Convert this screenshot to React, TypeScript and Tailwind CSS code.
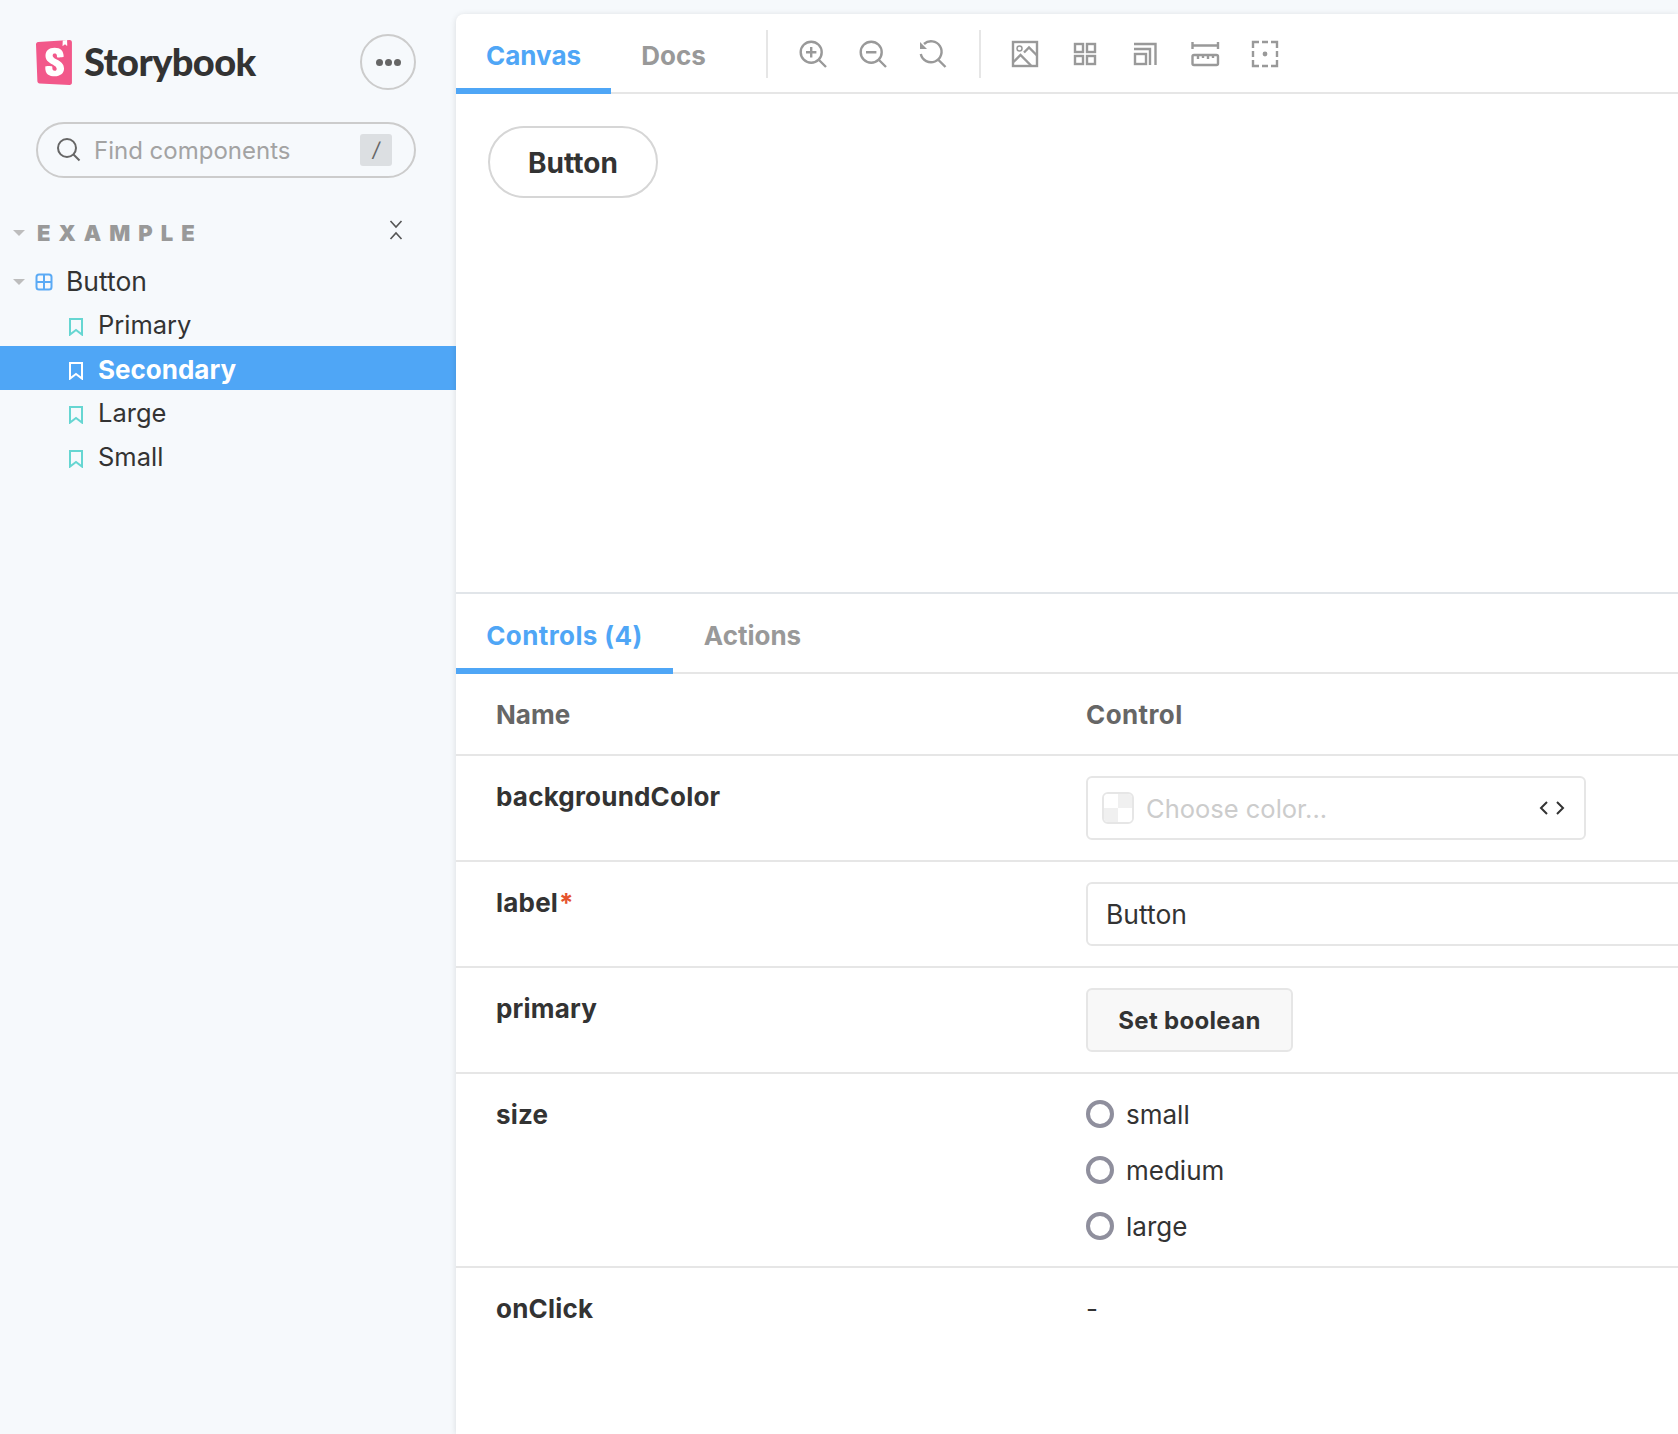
import React from "react";

const Gray = "#999999";

function Logo() {
  return (
    <svg width="36" height="45" viewBox="0 0 256 319" className="shrink-0">
      <path d="M9.87 293.32L.01 30.57C-.31 21.9 6.34 14.54 15 14L238.49.03c8.82-.55 16.42 6.15 16.97 14.97.02.33.03.66.03 1v286.64c0 8.84-7.16 16-16 16-.24 0-.48 0-.72-.02l-213.67-9.6c-8.35-.37-15-7.05-15.3-15.4z" fill="#F2588A" />
      <path d="M188.67 39.13l1.52-36.72 30.7-2.41 1.32 37.87a2.39 2.39 0 01-3.87 1.99l-11.84-9.32-14.01 10.63a2.39 2.39 0 01-3.82-2.04zm-39.26 80.87c0 6.23 41.94 3.24 47.57-1.13 0-42.4-22.75-64.68-64.42-64.68-41.67 0-65.02 22.63-65.02 56.58 0 59.13 79.8 60.26 79.8 92.51 0 9.05-4.43 14.43-14.18 14.43-12.7 0-17.72-6.49-17.13-28.55 0-4.79-48.4-6.28-49.87 0-3.76 53.53 29.58 68.97 67.58 68.97 36.83 0 65.7-19.63 65.7-55.17 0-63.18-80.98-61.49-80.98-92.8 0-12.7 9.43-14.39 15.02-14.39 5.9 0 16.52 1.04 15.63 24.23z" fill="#FFF" />
    </svg>
  );
}

function Bookmark({ color }: { color: string }) {
  return (
    <svg width="14" height="18" viewBox="0 0 14 18" fill="none" className="mt-[2px] shrink-0">
      <path d="M1 1h12v15.6L7 12l-6 4.6V1z" stroke={color} strokeWidth="2" />
    </svg>
  );
}

function Caret({ color }: { color: string }) {
  return (
    <svg width="12" height="6" viewBox="0 0 12 6" className="shrink-0">
      <path d="M0 0h12L6 6z" fill={color} />
    </svg>
  );
}

function TreeRow({ label, active }: { label: string; active?: boolean }) {
  return (
    <div className={active ? "flex h-[44px] items-center gap-[15px] bg-[#4FA6F6] pl-[69px] pt-[3px] text-[26px] font-bold text-white" : "flex h-[44px] items-center gap-[15px] pl-[69px] pt-[3px] text-[25.5px] text-[#333333]"}>
      <Bookmark color={active ? "#ffffff" : "#66D6D2"} />
      <span>{label}</span>
    </div>
  );
}

function ToolIcon({ children }: { children: React.ReactNode }) {
  return (
    <div className="flex h-[30px] w-[60px] items-center justify-center">
      <svg width="30" height="30" viewBox="0 0 30 30" fill="none" stroke={Gray} strokeWidth="2.4">
        {children}
      </svg>
    </div>
  );
}

function Row({ name, required, children, h }: { name: string; required?: boolean; children: React.ReactNode; h: string }) {
  return (
    <div className={`flex pl-[40px] ${h}`}>
      <div className="w-[590px] shrink-0 pt-[23px] text-[26px] font-bold leading-[36px] tracking-[0.2px] text-[#333333]">
        {name}
        {required && <span className="ml-[1px] text-[#E5532D]">*</span>}
      </div>
      <div className="min-w-0 flex-1 pt-[20px]">{children}</div>
    </div>
  );
}

function Radio({ label }: { label: string }) {
  return (
    <div className="flex h-[56px] items-center gap-[12px]">
      <span className="h-[28px] w-[28px] shrink-0 rounded-full border-[4px] border-[#8F8F9D] bg-white" />
      <span className="text-[26px] text-[#333333]">{label}</span>
    </div>
  );
}

export default function App() {
  return (
    <div className="flex h-[1434px] w-[1678px] overflow-hidden bg-[#F6F9FC] font-['Inter',sans-serif]">
      <aside className="w-[456px] shrink-0">
        <div className="flex h-[122px] items-start pl-[36px] pr-[40px] pt-[34px]">
          <div className="mt-[6px]">
            <Logo />
          </div>
          <span className="ml-[12px] mt-[2px] font-['Lato',sans-serif] text-[38px] font-black leading-[50px] tracking-[-0.6px] text-[#333333]">Storybook</span>
          <div className="ml-auto flex h-[56px] w-[56px] items-center justify-center gap-[2px] rounded-full border-2 border-[#CCCCCC]">
            <span className="h-[7px] w-[7px] rounded-full bg-[#666666]" />
            <span className="h-[7px] w-[7px] rounded-full bg-[#666666]" />
            <span className="h-[7px] w-[7px] rounded-full bg-[#666666]" />
          </div>
        </div>
        <div className="mx-[36px] mr-[40px] flex h-[56px] items-center rounded-full border-2 border-[#CCCCCC] pl-[19px] pr-[22px]">
          <svg width="24" height="24" viewBox="0 0 24 24" fill="none" stroke="#666666" strokeWidth="2" className="shrink-0">
            <circle cx="10" cy="10" r="9" />
            <path d="M16.5 16.5l6 6" />
          </svg>
          <span className="ml-[13px] pt-[2px] text-[24px] text-[#A3A3A3]">Find components</span>
          <span className="ml-auto flex h-[32px] w-[32px] items-center justify-center rounded-[3px] bg-[#DCDFE2] text-[20px] italic text-[#666666]">/</span>
        </div>
        <div className="mt-[44px] flex h-[22px] items-center pl-[13px] pr-[53px]">
          <Caret color="#BDBDBD" />
          <span className="ml-[12px] text-[22px] font-black leading-none tracking-[8px] text-[#999999]">EXAMPLE</span>
          <svg width="14" height="20" viewBox="0 0 14 20" fill="none" stroke="#555555" strokeWidth="1.6" className="ml-auto -mt-[6px]">
            <path d="M1.5 1l5.5 6 5.5-6M1.5 19l5.5-6 5.5 6" />
          </svg>
        </div>
        <div className="mt-[14px] flex h-[44px] items-center pl-[13px] pt-[4px] text-[26.5px] text-[#333333]">
          <Caret color="#BDBDBD" />
          <svg width="18" height="18" viewBox="0 0 18 18" fill="none" stroke="#5AAAF5" strokeWidth="2" className="ml-[10px] shrink-0">
            <rect x="1.5" y="1.5" width="15" height="15" rx="2.5" />
            <path d="M9 1.5v15M1.5 9h15" />
          </svg>
          <span className="ml-[13px]">Button</span>
        </div>
        <TreeRow label="Primary" />
        <TreeRow label="Secondary" active />
        <TreeRow label="Large" />
        <TreeRow label="Small" />
      </aside>

      <main className="mt-[14px] min-w-0 flex-1 rounded-tl-[8px] bg-white shadow-[0_1px_6px_rgba(0,0,0,0.12)]">
        <div className="flex h-[80px] border-b-2 border-[#E6E6E6]">
          <div className="flex h-[80px] w-[155px] items-center justify-center border-b-[6px] border-[#4FA6F6] pt-[8px] text-[26px] font-bold text-[#4FA6F6]">Canvas</div>
          <div className="flex h-[78px] w-[125px] items-center justify-center pt-[4px] text-[26px] font-bold text-[#999999]">Docs</div>
          <div className="ml-[30px] mt-[16px] h-[48px] w-[2px] bg-[#E6E6E6]" />
          <div className="ml-[15px] mt-[25px] flex h-[30px]">
            <ToolIcon>
              <circle cx="13.2" cy="13.2" r="10.5" />
              <path d="M21 21l7 7M13.2 8v10.4M8 13.2h10.4" />
            </ToolIcon>
            <ToolIcon>
              <circle cx="13.2" cy="13.2" r="10.5" />
              <path d="M21 21l7 7M8 13.2h10.4" />
            </ToolIcon>
            <ToolIcon>
              <path d="M6 5A10.5 10.5 0 1 1 2.8 15" />
              <path d="M2 3v7h7z" fill={Gray} stroke="none" />
              <path d="M20.5 21l7 7" />
            </ToolIcon>
          </div>
          <div className="ml-[16px] mt-[16px] h-[48px] w-[2px] bg-[#E6E6E6]" />
          <div className="ml-[14px] mt-[25px] flex h-[30px]">
            <ToolIcon>
              <rect x="3" y="3" width="24" height="24" />
              <circle cx="9.5" cy="9.5" r="2.5" strokeWidth="1.5" />
              <path d="M3.5 23l7-7 10.5 10.5M14 13.5l5-5 8 8" />
            </ToolIcon>
            <ToolIcon>
              <rect x="5" y="5" width="8" height="8" />
              <rect x="17" y="5" width="8" height="8" />
              <rect x="5" y="17" width="8" height="8" />
              <rect x="17" y="17" width="8" height="8" />
            </ToolIcon>
            <ToolIcon>
              <rect x="5" y="15" width="11" height="10" />
              <path d="M4 5h21.5v21M4 10h16v16" />
            </ToolIcon>
            <ToolIcon>
              <path d="M2.5 6.5H28M2.5 3v7M28 3v7" />
              <rect x="2.5" y="16" width="25.5" height="10" rx="1.5" />
              <path d="M8 16v4M13 16v3M18 16v4M23 16v3" />
            </ToolIcon>
            <ToolIcon>
              <path d="M3 9V3h6M21 3h6v6M27 21v6h-6M9 27H3v-6M12 3h6M12 27h6M3 12v6M27 12v6" />
              <circle cx="15" cy="15" r="1.2" fill={Gray} />
            </ToolIcon>
          </div>
        </div>

        <div className="h-[500px] border-b-2 border-[#E1E5E9] pl-[32px] pt-[32px]">
          <div className="flex h-[72px] w-[170px] items-center justify-center rounded-full border-2 border-[#D6D6D6] pt-[2px] text-[28px] font-bold text-[#333333]">Button</div>
        </div>

        <div className="flex h-[80px] border-b-2 border-[#E6E6E6]">
          <div className="flex h-[80px] w-[217px] items-center justify-center border-b-[6px] border-[#4FA6F6] pt-[8px] text-[26px] font-bold tracking-[0.4px] text-[#4FA6F6]">Controls (4)</div>
          <div className="flex h-[78px] w-[159px] items-center justify-center pt-[4px] text-[26px] font-bold text-[#999999]">Actions</div>
        </div>

        <div className="flex h-[82px] items-center border-b-2 border-[#E6E6E6] pl-[40px] text-[26px] font-bold text-[#666666]">
          <div className="w-[590px] shrink-0">Name</div>
          <div className="tracking-[0.4px]">Control</div>
        </div>

        <Row name="backgroundColor" h="h-[106px] border-b-2 border-[#E6E6E6]">
          <div className="flex h-[64px] w-[500px] items-center rounded-[6px] border-2 border-[#E6E6E6] pl-[14px] pr-[19px]">
            <div className="grid h-[32px] w-[32px] shrink-0 grid-cols-2 grid-rows-2 overflow-hidden rounded-[6px] border-2 border-[#E6E6E6]">
              <span className="bg-white" />
              <span className="bg-[#F0F0F0]" />
              <span className="bg-[#F0F0F0]" />
              <span className="bg-white" />
            </div>
            <span className="ml-[12px] pt-[2px] text-[25.5px] text-[#CCCCCC]">Choose color...</span>
            <svg width="26" height="16" viewBox="0 0 26 16" fill="none" stroke="#333333" strokeWidth="2" className="ml-auto">
              <path d="M8 2l-6 6 6 6M18 2l6 6-6 6" />
            </svg>
          </div>
        </Row>
        <Row name="label" required h="h-[106px] border-b-2 border-[#E6E6E6]">
          <div className="flex h-[64px] w-[640px] items-center rounded-l-[6px] border-2 border-[#E6E6E6] pl-[18px] pt-[2px] text-[26.5px] text-[#333333]">Button</div>
        </Row>
        <Row name="primary" h="h-[106px] border-b-2 border-[#E6E6E6]">
          <div className="flex h-[64px] w-[207px] items-center justify-center rounded-[6px] border-2 border-[#E6E6E6] bg-[#F8F8F8] pt-[2px] text-[24px] font-bold tracking-[0.3px] text-[#333333]">Set boolean</div>
        </Row>
        <Row name="size" h="h-[194px] border-b-2 border-[#E6E6E6]">
          <div className="-mt-[8px] flex flex-col">
            <Radio label="small" />
            <Radio label="medium" />
            <Radio label="large" />
          </div>
        </Row>
        <Row name="onClick" h="h-[100px]">
          <div className="pt-[3px] text-[26px] leading-[36px] text-[#333333]">-</div>
        </Row>
      </main>
    </div>
  );
}
